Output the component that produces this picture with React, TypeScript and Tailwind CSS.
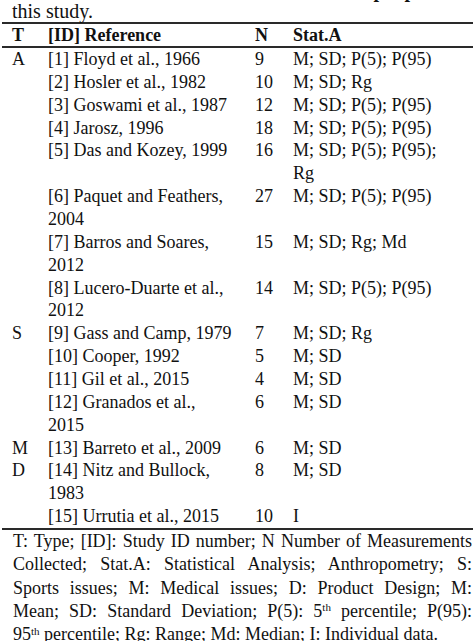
import React from 'react';

type Row = {
  type?: string;
  ref: string[];
  n: string;
  stat: string[];
};

const rows: Row[] = [
  { type: 'A', ref: ['[1] Floyd et al., 1966'], n: '9', stat: ['M; SD; P(5); P(95)'] },
  { ref: ['[2] Hosler et al., 1982'], n: '10', stat: ['M; SD; Rg'] },
  { ref: ['[3] Goswami et al., 1987'], n: '12', stat: ['M; SD; P(5); P(95)'] },
  { ref: ['[4] Jarosz, 1996'], n: '18', stat: ['M; SD; P(5); P(95)'] },
  { ref: ['[5] Das and Kozey, 1999'], n: '16', stat: ['M; SD; P(5); P(95);', 'Rg'] },
  { ref: ['[6] Paquet and Feathers,', '2004'], n: '27', stat: ['M; SD; P(5); P(95)'] },
  { ref: ['[7] Barros and Soares,', '2012'], n: '15', stat: ['M; SD; Rg; Md'] },
  { ref: ['[8] Lucero-Duarte et al.,', '2012'], n: '14', stat: ['M; SD; P(5); P(95)'] },
  { type: 'S', ref: ['[9] Gass and Camp, 1979'], n: '7', stat: ['M; SD; Rg'] },
  { ref: ['[10] Cooper, 1992'], n: '5', stat: ['M; SD'] },
  { ref: ['[11] Gil et al., 2015'], n: '4', stat: ['M; SD'] },
  { ref: ['[12] Granados et al.,', '2015'], n: '6', stat: ['M; SD'] },
  { type: 'M', ref: ['[13] Barreto et al., 2009'], n: '6', stat: ['M; SD'] },
  { type: 'D', ref: ['[14] Nitz and Bullock,', '1983'], n: '8', stat: ['M; SD'] },
  { ref: ['[15] Urrutia et al., 2015'], n: '10', stat: ['I'] },
];

function Lines({ lines }: { lines: string[] }) {
  return (
    <>
      {lines.map((l, i) => (
        <div key={i} className="whitespace-nowrap">
          {l}
        </div>
      ))}
    </>
  );
}

export default function App() {
  return (
    <div
      className="w-[474px] h-[641px] overflow-hidden bg-white text-[#111]"
      style={{ fontFamily: '"Liberation Serif", "Times New Roman", serif' }}
    >
      {/* caption */}
      <div className="pl-[12px] text-[20px] leading-[21px]">
        <div className="-mt-[20px] font-bold whitespace-nowrap">
          Table 1. Characteristics of the studies and purposes of
        </div>
        <div>this study.</div>
      </div>

      <div className="ml-[2px] w-[471px] text-[18px] leading-[22.86px]">
        {/* header */}
        <div className="border-y-2 border-[#2a2a2a] grid grid-cols-[46px_207px_38px_1fr] font-bold leading-[22px]">
          <div className="pl-[10px]">T</div>
          <div>[ID] Reference</div>
          <div>N</div>
          <div>Stat.A</div>
        </div>

        {/* body */}
        <div className="border-b-2 border-[#2a2a2a]">
          {rows.map((r, i) => (
            <div key={i} className="grid grid-cols-[46px_207px_38px_1fr]">
              <div className="pl-[10px]">{r.type ?? ''}</div>
              <div>
                <Lines lines={r.ref} />
              </div>
              <div>{r.n}</div>
              <div>
                <Lines lines={r.stat} />
              </div>
            </div>
          ))}
        </div>

        {/* notes */}
        <div className="pl-[11px] pr-[1px] leading-[23.3px] text-justify">
          <div className="[text-align-last:justify] whitespace-nowrap">
            T: Type; [ID]: Study ID number; N Number of Measurements
          </div>
          <div className="[text-align-last:justify]">
            Collected; Stat.A: Statistical Analysis; Anthropometry; S:
          </div>
          <div className="[text-align-last:justify]">
            Sports issues; M: Medical issues; D: Product Design; M:
          </div>
          <div className="[text-align-last:justify]">
            Mean; SD: Standard Deviation; P(5): 5<sup className="text-[11px]">th</sup> percentile; P(95):
          </div>
          <div>
            95<sup className="text-[11px]">th</sup> percentile; Rg: Range; Md: Median; I: Individual data.
          </div>
        </div>
      </div>
    </div>
  );
}
